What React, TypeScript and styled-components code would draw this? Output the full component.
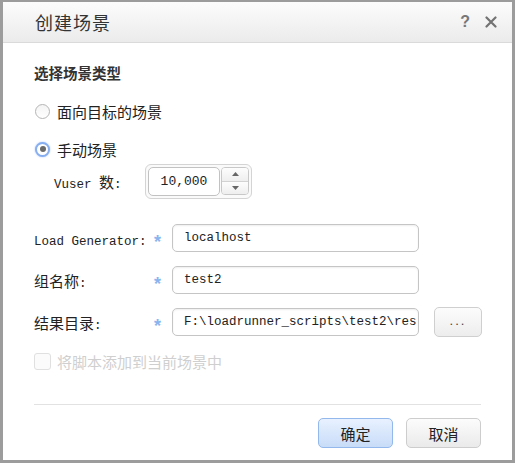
import styled, { createGlobalStyle } from "styled-components";

const GlobalStyle = createGlobalStyle`
  html, body {
    margin: 0;
    padding: 0;
    background: #fff;
  }
  body {
    font-family: "Noto Sans CJK SC", "Liberation Sans", sans-serif;
    color: #222;
  }
`;

const CJK = `"Noto Sans CJK SC", sans-serif`;
const MONO = `"Liberation Mono", "Noto Sans CJK SC", monospace`;

function App() {
  return (
    <>
      <GlobalStyle />
      <Dialog>
        <TitleBar>
          <Title>创建场景</Title>
          <TitleTools>
            <HelpMark>?</HelpMark>
            <svg width="12" height="12" viewBox="0 0 12 12">
              <path
                d="M1.5 1.5 L10.5 10.5 M10.5 1.5 L1.5 10.5"
                stroke="#737373"
                strokeWidth="2.2"
                strokeLinecap="round"
              />
            </svg>
          </TitleTools>
        </TitleBar>

        <Body>
          <Heading>选择场景类型</Heading>

          <RadioRow>
            <Radio />
            <span>面向目标的场景</span>
          </RadioRow>
          <RadioRow $second>
            <Radio $checked />
            <span>手动场景</span>
          </RadioRow>

          <VuserRow>
            <VuserLabel>
              <Mono>Vuser </Mono>数<Mono>:</Mono>
            </VuserLabel>
            <Spinner>
              <SpinInput>10,000</SpinInput>
              <Stepper>
                <Step>
                  <svg width="7" height="4" viewBox="0 0 7 4">
                    <path d="M0 4 L3.5 0 L7 4 Z" fill="#666" />
                  </svg>
                </Step>
                <Step $bottom>
                  <svg width="7" height="4" viewBox="0 0 7 4">
                    <path d="M0 0 L3.5 4 L7 0 Z" fill="#666" />
                  </svg>
                </Step>
              </Stepper>
            </Spinner>
          </VuserRow>

          <Form>
            <FieldLabel>
              <Mono>Load Generator:</Mono>
            </FieldLabel>
            <Star>*</Star>
            <TextBox>localhost</TextBox>
            <span />

            <FieldLabel>
              组名称<Mono>:</Mono>
            </FieldLabel>
            <Star>*</Star>
            <TextBox>test2</TextBox>
            <span />

            <FieldLabel>
              结果目录<Mono>:</Mono>
            </FieldLabel>
            <Star>*</Star>
            <TextBox>F:\loadrunner_scripts\test2\res</TextBox>
            <BrowseButton>...</BrowseButton>
          </Form>

          <CheckRow>
            <CheckBox />
            <span>将脚本添加到当前场景中</span>
          </CheckRow>

          <Separator />

          <Footer>
            <Button $primary>确定</Button>
            <Button>取消</Button>
          </Footer>
        </Body>
      </Dialog>
    </>
  );
}

const Dialog = styled.div`
  box-sizing: border-box;
  width: 515px;
  height: 463px;
  border: 3px solid #9c9c9c;
  border-top-width: 2px;
  background: #fff;
  display: flex;
  flex-direction: column;
`;

const TitleBar = styled.div`
  height: 40px;
  display: flex;
  align-items: center;
  justify-content: space-between;
  padding: 0 15px 0 32px;
  background: linear-gradient(#fcfcfc, #ebebeb);
  border-bottom: 1px solid #dadada;
`;

const Title = styled.div`
  font-family: ${CJK};
  font-size: 18px;
  color: #333;
  letter-spacing: 1px;
`;

const TitleTools = styled.div`
  display: flex;
  align-items: center;
  gap: 15px;
`;

const HelpMark = styled.span`
  font-family: "Liberation Sans", sans-serif;
  font-weight: bold;
  font-size: 16px;
  color: #777;
`;

const Body = styled.div`
  flex: 1;
  display: flex;
  flex-direction: column;
  padding: 20px 31px 0 31px;
  font-family: ${CJK};
  font-size: 15px;
`;

const Heading = styled.div`
  font-weight: bold;
  font-size: 14.5px;
  line-height: 20px;
  color: #333;
`;

const RadioRow = styled.div<{ $second?: boolean }>`
  display: flex;
  align-items: center;
  gap: 7px;
  height: 22px;
  margin-top: ${({ $second }) => ($second ? "16px" : "17px")};
  padding-left: 1px;
  color: #222;
`;

const Radio = styled.span<{ $checked?: boolean }>`
  box-sizing: border-box;
  width: 15px;
  height: 15px;
  border-radius: 50%;
  flex: none;
  position: relative;
  border: ${({ $checked }) => ($checked ? "2px solid #86aef0" : "1px solid #b5b5b5")};
  background: ${({ $checked }) =>
    $checked ? "#fff" : "linear-gradient(#f4f4f4, #fff)"};
  box-shadow: ${({ $checked }) => ($checked ? "0 0 2px #a9c6f7" : "none")};

  &::after {
    content: "";
    display: ${({ $checked }) => ($checked ? "block" : "none")};
    position: absolute;
    left: 2.5px;
    top: 2.5px;
    width: 6px;
    height: 6px;
    border-radius: 50%;
    background: #6a6a6a;
  }
`;

const VuserRow = styled.div`
  display: flex;
  align-items: center;
  margin-top: 4px;
  padding-left: 20px;
`;

const VuserLabel = styled.span`
  width: 91px;
  font-size: 15px;
  color: #222;
`;

const Mono = styled.span`
  font-family: ${MONO};
  font-size: 12.5px;
`;

const Spinner = styled.div`
  display: flex;
  gap: 1px;
  padding: 2px;
  border: 1px solid #d4d4d4;
  border-radius: 6px;
  background: #fafafa;
`;

const SpinInput = styled.div`
  box-sizing: border-box;
  width: 72px;
  height: 29px;
  border: 1px solid #c2c2c2;
  border-radius: 5px;
  background: #fff;
  font-family: ${MONO};
  font-size: 13px;
  display: flex;
  align-items: center;
  justify-content: center;
  color: #222;
`;

const Stepper = styled.div`
  box-sizing: border-box;
  width: 28px;
  height: 28px;
  display: flex;
  flex-direction: column;
  border: 1px solid #c8c8c8;
  border-radius: 4px;
  overflow: hidden;
`;

const Step = styled.div<{ $bottom?: boolean }>`
  flex: 1;
  display: flex;
  align-items: center;
  justify-content: center;
  background: linear-gradient(#fdfdfd, #eeeeee);
  border-top: ${({ $bottom }) => ($bottom ? "1px solid #d2d2d2" : "none")};
`;

const Form = styled.div`
  display: grid;
  grid-template-columns: 120px 18px 247px 48px;
  grid-auto-rows: 28px;
  row-gap: 14px;
  align-items: center;
  margin-top: 25px;

  & > :nth-child(4n) {
    margin-left: 15px;
  }
`;

const FieldLabel = styled.div`
  font-size: 15px;
  color: #222;
  white-space: nowrap;
`;

const Star = styled.span`
  font-family: "Liberation Sans", sans-serif;
  font-weight: bold;
  font-size: 18px;
  color: #8ab4ef;
  padding-top: 9px;
  text-align: left;
`;

const TextBox = styled.div`
  box-sizing: border-box;
  height: 28px;
  padding: 0 11px;
  border: 1px solid #c5c5c5;
  border-radius: 5px;
  background: #fff;
  box-shadow: inset 0 1px 2px #eee;
  font-family: ${MONO};
  font-size: 12.5px;
  color: #222;
  display: flex;
  align-items: center;
  overflow: hidden;
  white-space: nowrap;
`;

const BrowseButton = styled.button`
  box-sizing: border-box;
  width: 48px;
  height: 30px;
  padding: 0 0 4px;
  border: 1px solid #cfcfcf;
  border-radius: 5px;
  background: linear-gradient(#fcfcfc, #ededed);
  font-family: "Liberation Sans", sans-serif;
  font-size: 13px;
  color: #444;
  letter-spacing: 2px;
`;

const CheckRow = styled.div`
  display: flex;
  align-items: center;
  gap: 6px;
  margin-top: 14px;
  height: 22px;
  color: #cfcfcf;
  font-size: 15px;
`;

const CheckBox = styled.span`
  box-sizing: border-box;
  width: 17px;
  height: 17px;
  border: 1px solid #e0e0e0;
  border-radius: 3px;
  background: #fbfbfb;
`;

const Separator = styled.div`
  height: 1px;
  background: #e2e2e2;
  margin-top: 32px;
`;

const Footer = styled.div`
  display: flex;
  justify-content: flex-end;
  gap: 13px;
  margin-top: 13px;
`;

const Button = styled.button<{ $primary?: boolean }>`
  box-sizing: border-box;
  width: 75px;
  height: 30px;
  border-radius: 5px;
  border: 1px solid ${({ $primary }) => ($primary ? "#92b8ec" : "#cdcdcd")};
  background: ${({ $primary }) =>
    $primary
      ? "linear-gradient(#e8f1ff, #c8dcf8)"
      : "linear-gradient(#fcfcfc, #eaeaea)"};
  font-family: ${CJK};
  font-size: 15px;
  color: #222;
`;

export default App;
